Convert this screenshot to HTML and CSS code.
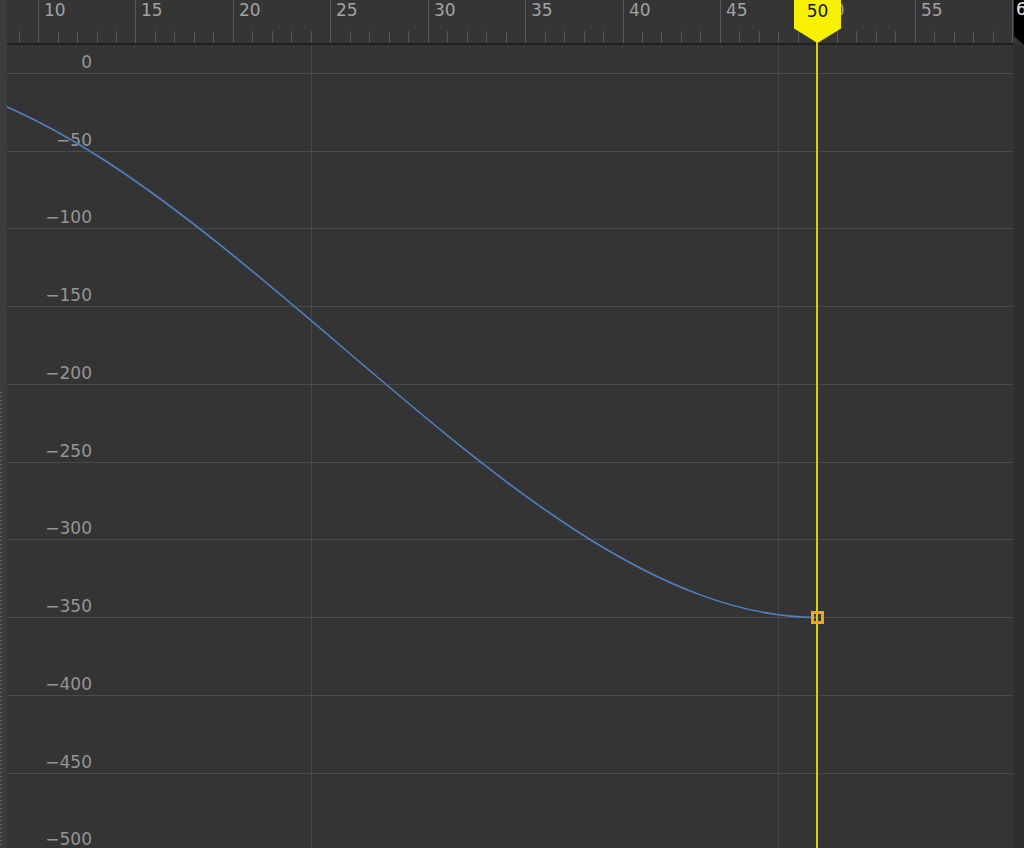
FILE: index.html
```html
<!DOCTYPE html>
<html>
<head>
<meta charset="utf-8">
<title>Graph Editor</title>
<link rel="stylesheet" href="styles.css">
</head>
<body>
<div class="app">
  <div class="side-strip"><div class="grip"></div></div>
  <div class="editor">
    <div class="ruler">
      <svg class="ruler-svg" width="1007" height="43" viewBox="7 0 1007 43" shape-rendering="crispEdges">
        <g class="minor">
          <line x1="19.5" y1="31" x2="19.5" y2="43"/>
          <line x1="58.5" y1="31" x2="58.5" y2="43"/>
          <line x1="77.5" y1="31" x2="77.5" y2="43"/>
          <line x1="97.5" y1="31" x2="97.5" y2="43"/>
          <line x1="116.5" y1="31" x2="116.5" y2="43"/>
          <line x1="155.5" y1="31" x2="155.5" y2="43"/>
          <line x1="174.5" y1="31" x2="174.5" y2="43"/>
          <line x1="194.5" y1="31" x2="194.5" y2="43"/>
          <line x1="213.5" y1="31" x2="213.5" y2="43"/>
          <line x1="252.5" y1="31" x2="252.5" y2="43"/>
          <line x1="272.5" y1="31" x2="272.5" y2="43"/>
          <line x1="291.5" y1="31" x2="291.5" y2="43"/>
          <line x1="311.5" y1="31" x2="311.5" y2="43"/>
          <line x1="350.5" y1="31" x2="350.5" y2="43"/>
          <line x1="369.5" y1="31" x2="369.5" y2="43"/>
          <line x1="389.5" y1="31" x2="389.5" y2="43"/>
          <line x1="408.5" y1="31" x2="408.5" y2="43"/>
          <line x1="447.5" y1="31" x2="447.5" y2="43"/>
          <line x1="467.5" y1="31" x2="467.5" y2="43"/>
          <line x1="486.5" y1="31" x2="486.5" y2="43"/>
          <line x1="506.5" y1="31" x2="506.5" y2="43"/>
          <line x1="545.5" y1="31" x2="545.5" y2="43"/>
          <line x1="564.5" y1="31" x2="564.5" y2="43"/>
          <line x1="584.5" y1="31" x2="584.5" y2="43"/>
          <line x1="603.5" y1="31" x2="603.5" y2="43"/>
          <line x1="642.5" y1="31" x2="642.5" y2="43"/>
          <line x1="661.5" y1="31" x2="661.5" y2="43"/>
          <line x1="681.5" y1="31" x2="681.5" y2="43"/>
          <line x1="700.5" y1="31" x2="700.5" y2="43"/>
          <line x1="739.5" y1="31" x2="739.5" y2="43"/>
          <line x1="759.5" y1="31" x2="759.5" y2="43"/>
          <line x1="778.5" y1="31" x2="778.5" y2="43"/>
          <line x1="798.5" y1="31" x2="798.5" y2="43"/>
          <line x1="837.5" y1="31" x2="837.5" y2="43"/>
          <line x1="856.5" y1="31" x2="856.5" y2="43"/>
          <line x1="876.5" y1="31" x2="876.5" y2="43"/>
          <line x1="895.5" y1="31" x2="895.5" y2="43"/>
          <line x1="934.5" y1="31" x2="934.5" y2="43"/>
          <line x1="954.5" y1="31" x2="954.5" y2="43"/>
          <line x1="973.5" y1="31" x2="973.5" y2="43"/>
          <line x1="993.5" y1="31" x2="993.5" y2="43"/>
        </g>
        <g class="major">
          <line x1="38.5" y1="0" x2="38.5" y2="43"/>
          <line x1="135.5" y1="0" x2="135.5" y2="43"/>
          <line x1="233.5" y1="0" x2="233.5" y2="43"/>
          <line x1="330.5" y1="0" x2="330.5" y2="43"/>
          <line x1="428.5" y1="0" x2="428.5" y2="43"/>
          <line x1="525.5" y1="0" x2="525.5" y2="43"/>
          <line x1="623.5" y1="0" x2="623.5" y2="43"/>
          <line x1="720.5" y1="0" x2="720.5" y2="43"/>
          <line x1="817.5" y1="0" x2="817.5" y2="43"/>
          <line x1="915.5" y1="0" x2="915.5" y2="43"/>
          <line x1="1012.5" y1="0" x2="1012.5" y2="43"/>
        </g>
        <g class="ruler-labels">
          <text x="44" y="16">10</text>
          <text x="141" y="16">15</text>
          <text x="239" y="16">20</text>
          <text x="336" y="16">25</text>
          <text x="434" y="16">30</text>
          <text x="531" y="16">35</text>
          <text x="629" y="16">40</text>
          <text x="726" y="16">45</text>
          <text x="823" y="16">50</text>
          <text x="921" y="16">55</text>
        </g>
      </svg>
    </div>
    <div class="graph">
      <svg class="graph-svg" width="1007" height="803" viewBox="7 45 1007 803">
        <g class="grid" shape-rendering="crispEdges">
          <line x1="311.5" y1="45" x2="311.5" y2="848"/>
          <line x1="778.5" y1="45" x2="778.5" y2="848"/>
          <line x1="7" y1="73.5" x2="1014" y2="73.5"/>
          <line x1="7" y1="151.5" x2="1014" y2="151.5"/>
          <line x1="7" y1="228.5" x2="1014" y2="228.5"/>
          <line x1="7" y1="306.5" x2="1014" y2="306.5"/>
          <line x1="7" y1="384.5" x2="1014" y2="384.5"/>
          <line x1="7" y1="462.5" x2="1014" y2="462.5"/>
          <line x1="7" y1="539.5" x2="1014" y2="539.5"/>
          <line x1="7" y1="617.5" x2="1014" y2="617.5"/>
          <line x1="7" y1="695.5" x2="1014" y2="695.5"/>
          <line x1="7" y1="773.5" x2="1014" y2="773.5"/>
        </g>
        <g class="value-labels">
          <text x="92" y="67.5">0</text>
          <text x="92" y="145.5">−50</text>
          <text x="92" y="222.5">−100</text>
          <text x="92" y="300.5">−150</text>
          <text x="92" y="378.5">−200</text>
          <text x="92" y="456.5">−250</text>
          <text x="92" y="533.5">−300</text>
          <text x="92" y="611.5">−350</text>
          <text x="92" y="689.5">−400</text>
          <text x="92" y="767.5">−450</text>
          <text x="92" y="845">−500</text>
        </g>
        <path class="curve" d="M -136.8 73.5 C 181.2 73.5 499.5 617.5 817.5 617.5"/>
      </svg>
    </div>
  </div>
  <div class="edge">
    <div class="edge-tab"><span class="edge-label">6</span></div>
    <div class="edge-rest"></div>
  </div>

  <div class="playhead"></div>
  <div class="keyframe"></div>
  <div class="marker"><span class="marker-label">50</span></div>
</div>
</body>
</html>
```

FILE: styles.css
```css
html, body {
  margin: 0;
  padding: 0;
}

body {
  width: 1024px;
  height: 848px;
  overflow: hidden;
  background: #343434;
  font-family: "DejaVu Sans", "Liberation Sans", sans-serif;
}

.app {
  position: relative;
  display: flex;
  width: 1024px;
  height: 848px;
}

.side-strip {
  width: 7px;
  flex: none;
  background: #3c3c3c;
  display: flex;
  flex-direction: column;
}

.grip {
  margin-top: 392px;
  width: 2px;
  flex: 1;
  background: repeating-linear-gradient(to bottom, #707070 0 1px, transparent 1px 4px);
  opacity: 0.8;
}

.editor {
  flex: 1;
  display: flex;
  flex-direction: column;
  min-width: 0;
}

.ruler {
  height: 43px;
  flex: none;
  background: #353535;
  border-bottom: 2px solid #1f1f1f;
  overflow: hidden;
}

.ruler-svg,
.graph-svg {
  display: block;
}

.minor line {
  stroke: #575757;
  stroke-width: 1;
}

.major line {
  stroke: #5a5a5a;
  stroke-width: 1;
}

.ruler-labels text {
  fill: #a2a2a2;
  font-family: "DejaVu Sans", sans-serif;
  font-size: 17px;
}

.graph {
  flex: 1;
  background: #343434;
  overflow: hidden;
}

.grid line {
  stroke: #4a4a4a;
  stroke-width: 1;
}

.grid line:nth-child(-n+2) {
  stroke: #464646;
}

.value-labels text {
  fill: #959595;
  font-family: "DejaVu Sans", sans-serif;
  font-size: 17px;
  text-anchor: end;
}

.curve {
  fill: none;
  stroke: #5080c4;
  stroke-width: 1.6;
}

.edge {
  width: 10px;
  flex: none;
  display: flex;
  flex-direction: column;
}

.edge-tab {
  height: 45px;
  flex: none;
  background: #000000;
  overflow: hidden;
  clip-path: polygon(0 0, 100% 0, 100% 100%, 0 80%);
}

.edge-label {
  display: block;
  padding: 0 0 0 2px;
  margin-top: -1px;
  color: #e8e8e8;
  font-size: 17px;
  line-height: 20px;
}

.edge-rest {
  flex: 1;
  background: #2e2e2e;
}

.playhead {
  position: absolute;
  left: 816px;
  top: 40px;
  bottom: 0;
  width: 2px;
  background: #d6d200;
}

.keyframe {
  position: absolute;
  left: 811px;
  top: 611px;
  width: 13px;
  height: 13px;
  box-sizing: border-box;
  border: 3px solid #f7a21c;
}

.marker {
  position: absolute;
  left: 794px;
  top: 0;
  width: 47px;
  height: 43px;
  background: #f7f000;
  clip-path: polygon(0 0, 100% 0, 100% 66%, 50% 100%, 0 66%);
  text-align: center;
}

.marker-label {
  display: block;
  padding-top: 1px;
  color: #141414;
  font-size: 17px;
  line-height: 20px;
}
```
